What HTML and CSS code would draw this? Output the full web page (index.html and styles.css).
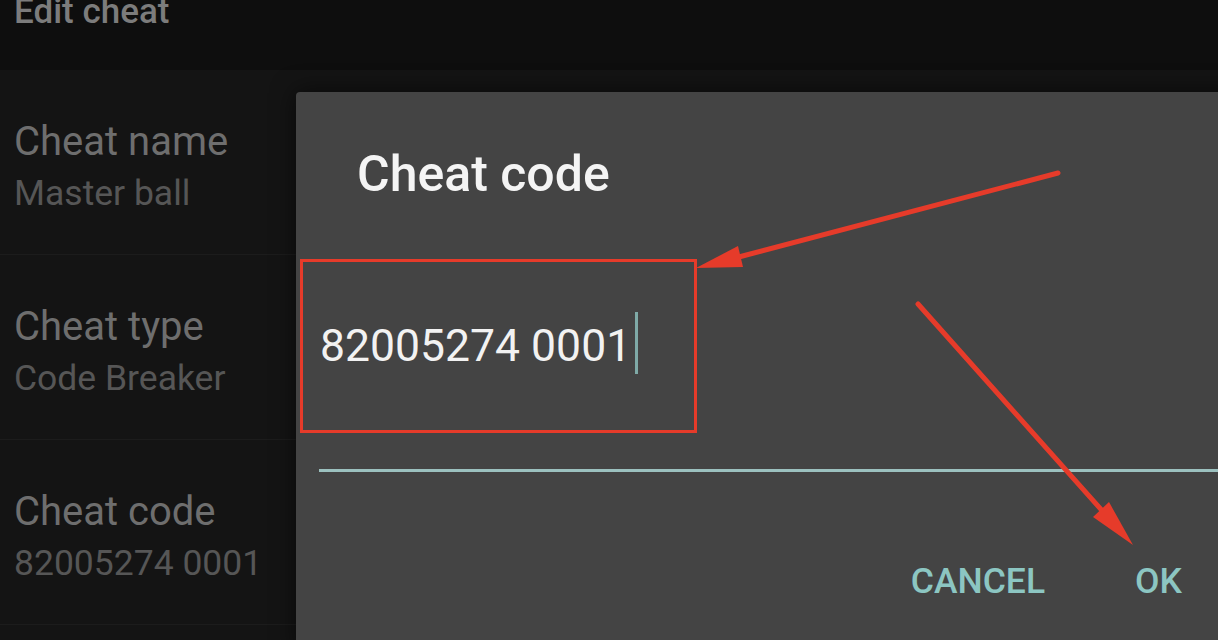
FILE: index.html
```html
<!DOCTYPE html>
<html lang="en">
<head>
  <meta charset="UTF-8" />
  <meta name="viewport" content="width=device-width, initial-scale=1.0"/>
  <title>Edit cheat</title>
  <link rel="stylesheet" href="styles.css">
</head>
<body>
  <header class="appbar">
    <div class="appbar-title">Edit cheat</div>
  </header>

  <ul class="settings">
    <li class="setting">
      <div class="setting-title">Cheat name</div>
      <div class="setting-value">Master ball</div>
    </li>
    <li class="setting">
      <div class="setting-title">Cheat type</div>
      <div class="setting-value">Code Breaker</div>
    </li>
    <li class="setting">
      <div class="setting-title">Cheat code</div>
      <div class="setting-value">82005274 0001</div>
    </li>
  </ul>

  <div class="dialog">
    <div class="dialog-title">Cheat code</div>
    <div class="field">
      <span class="field-text">82005274 0001</span><span class="caret"></span>
    </div>
    <div class="dialog-actions">
      <span class="action">CANCEL</span>
      <span class="action">OK</span>
    </div>
  </div>

  <!-- annotation marks drawn over the screenshot -->
  <svg class="marks" width="1218" height="640" viewBox="0 0 1218 640">
    <rect x="301.5" y="260.5" width="394" height="171" fill="none" stroke="#e63b2a" stroke-width="3"/>
    <line x1="1058" y1="173" x2="735" y2="258" stroke="#e63b2a" stroke-width="5" stroke-linecap="round"/>
    <polygon points="696,268 743,267 738,246" fill="#e63b2a"/>
    <line x1="918" y1="304" x2="1106" y2="515" stroke="#e63b2a" stroke-width="5" stroke-linecap="round"/>
    <polygon points="1133,545 1093,517 1109,502" fill="#e63b2a"/>
  </svg>
</body>
</html>
```

FILE: styles.css
```css
:root {
  --bar: #0e0e0e;
  --list: #141414;
  --divider: #1c1c1c;
  --dialog: #444444;
  --teal: #8cc6c2;
  --line: #9cc1bf;
  --red: #e63b2a;
}

* {
  margin: 0;
  padding: 0;
  box-sizing: border-box;
}

body {
  font-family: Roboto, 'Noto Sans', sans-serif;
  background: var(--list);
  width: 1218px;
  height: 640px;
  overflow: hidden;
  position: relative;
}

.appbar {
  height: 70px;
  background: var(--bar);
  padding-left: 14px;
  overflow: hidden;
}

.appbar-title {
  font-size: 35px;
  font-weight: 500;
  line-height: 36px;
  margin-top: -6px;
  color: #7c7c7c;
}

.settings {
  list-style: none;
}

.setting {
  height: 185px;
  padding: 48px 14px 0;
  border-bottom: 1px solid var(--divider);
}

.setting-title {
  font-size: 40px;
  line-height: 48px;
  color: #6e6e6e;
}

.setting-value {
  font-size: 35.5px;
  line-height: 48px;
  margin-top: 3px;
  color: #565656;
}

.dialog {
  position: absolute;
  left: 296px;
  top: 92px;
  width: 940px;
  height: 560px;
  background: var(--dialog);
  border-radius: 4px;
  box-shadow: 0 0 24px rgba(0, 0, 0, 0.6);
}

.dialog-title {
  padding: 54px 0 0 61px;
  font-size: 50px;
  font-weight: 500;
  line-height: 56px;
  color: #f4f4f4;
}

.field {
  margin: 110px 0 0 23px;
  padding: 0 0 92px 1px;
  border-bottom: 3px solid var(--line);
  font-size: 44.5px;
  line-height: 62px;
  color: #f2f2f2;
}

.caret {
  display: inline-block;
  width: 3px;
  height: 62px;
  margin-left: 4px;
  vertical-align: -13px;
  background: #7faaa7;
}

.dialog-actions {
  display: flex;
  justify-content: flex-end;
  gap: 90px;
  margin-top: 89px;
  padding-right: 54px;
  font-size: 35.5px;
  font-weight: 500;
  line-height: 40px;
  color: var(--teal);
}

.marks {
  position: absolute;
  left: 0;
  top: 0;
  pointer-events: none;
}
```
